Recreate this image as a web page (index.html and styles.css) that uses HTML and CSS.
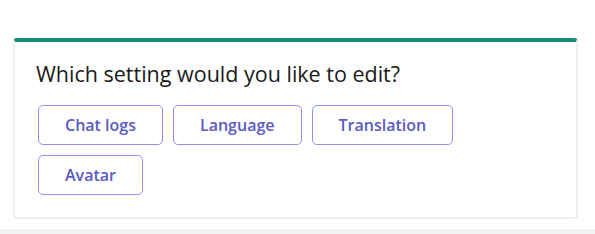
FILE: index.html
```html
<!DOCTYPE html>
<html>
<head>
<meta charset="utf-8">
<link rel="stylesheet" href="styles.css">
</head>
<body>
<div class="page">
  <div class="card">
    <h2 class="question">Which setting would you like to edit?</h2>
    <div class="options">
      <button class="option">Chat logs</button>
      <button class="option">Language</button>
      <button class="option">Translation</button>
      <button class="option">Avatar</button>
    </div>
  </div>
</div>
<div class="footer-band"></div>
</body>
</html>
```

FILE: styles.css
```css
html, body {
  margin: 0;
  padding: 0;
  background: #ffffff;
}
body {
  font-family: "Open Sans", "Noto Sans", sans-serif;
  width: 595px;
  height: 234px;
  overflow: hidden;
}
.page {
  padding: 38px 17px 0 13px;
  height: 191px;
  box-sizing: border-box;
}
.card {
  box-sizing: border-box;
  height: 181px;
  border: 2px solid #eeeeee;
  border-top: 4px solid #178f74;
  border-radius: 4px;
  padding: 17px 22px 0 21px;
}
.question {
  margin: 0 0 16px 0;
  font-size: 21.5px;
  font-weight: 500;
  color: #1a1a1a;
  line-height: 30px;
}
.options {
  display: flex;
  flex-wrap: wrap;
  gap: 10px 10px;
  padding-left: 2px;
  width: 430px;
}
.option {
  font-family: inherit;
  font-size: 16px;
  font-weight: 600;
  height: 40px;
  padding: 0 26px;
  background: #ffffff;
  border: 1px solid #9090f2;
  border-radius: 5px;
  color: #5a5ac2;
  cursor: pointer;
}
.footer-band {
  margin-top: 38px;
  height: 10px;
  background: #f3f3f3;
}
```
